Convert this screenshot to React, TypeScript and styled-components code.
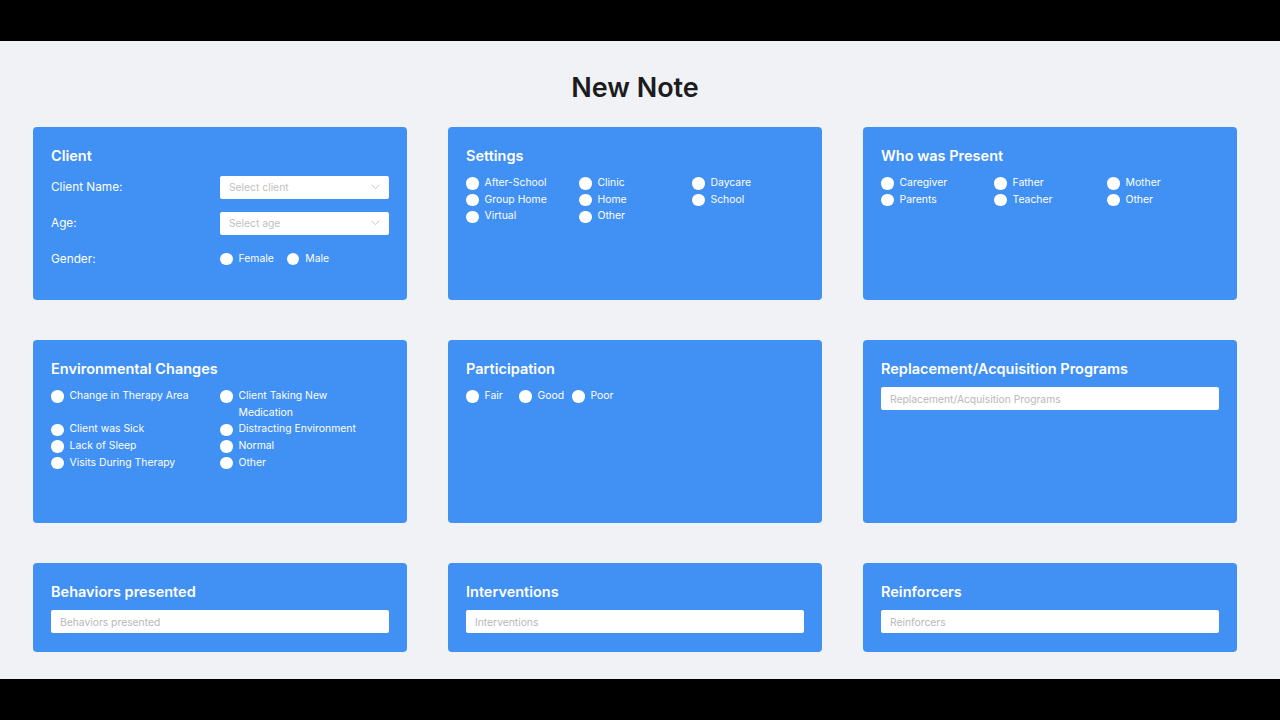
import { FunctionComponent } from 'react';
import styled, { createGlobalStyle } from 'styled-components';

const GlobalStyle = createGlobalStyle`
  html, body {
    margin: 0;
    padding: 0;
    background: #000;
  }
  body {
    font-family: Inter, 'Noto Sans', 'Liberation Sans', sans-serif;
  }
`;

const Letterbox = styled.div<{ h: number }>`
  height: ${(p) => p.h}px;
  background: #000;
`;

const Page = styled.div`
  height: 638px;
  background: #f0f2f5;
  padding: 0 43px 0 33px;
  box-sizing: border-box;
  overflow: hidden;
`;

const Title = styled.h1`
  margin: 0;
  padding: 30px 0 22px;
  text-align: center;
  font-size: 27px;
  line-height: 34px;
  font-weight: 600;
  color: #1c1c1e;
`;

const Grid = styled.div`
  display: grid;
  grid-template-columns: repeat(3, 1fr);
  column-gap: 41px;
  row-gap: 40px;
`;

const Card = styled.section<{ minH?: number }>`
  background: #4190f4;
  border-radius: 4px;
  padding: 18px 18px 19px;
  box-sizing: border-box;
  min-height: ${(p) => (p.minH ? `${p.minH}px` : 'auto')};
  color: #fff;
`;

const CardTitle = styled.h2`
  margin: 0 0 4px;
  font-size: 14.5px;
  line-height: 22px;
  font-weight: 600;
  color: #fff;
`;

const FieldRow = styled.div`
  display: grid;
  grid-template-columns: 169px 1fr;
  align-items: center;
  height: 36px;
  &:first-of-type {
    margin-top: -2px;
  }
`;

const FieldLabel = styled.span`
  font-size: 11.8px;
  color: #fff;
`;

const Select = styled.div`
  height: 23px;
  background: #fff;
  border-radius: 2px;
  display: flex;
  align-items: center;
  justify-content: space-between;
  padding: 0 9px;
  font-size: 10.3px;
  color: #bfbfbf;
`;

const TextInput = styled.input`
  display: block;
  width: 100%;
  box-sizing: border-box;
  height: 23px;
  border: none;
  border-radius: 2px;
  background: #fff;
  margin-top: 7px;
  padding: 0 9px;
  font-family: inherit;
  font-size: 10.3px;
  color: #333;
  outline: none;
  &::placeholder {
    color: #b8b8b8;
  }
`;

const RadioGrid = styled.div<{ cols: string }>`
  display: grid;
  grid-template-columns: ${(p) => p.cols};
  margin-top: 8px;
`;

const RadioItem = styled.label`
  display: flex;
  align-items: flex-start;
  gap: 6px;
  font-size: 10.4px;
  line-height: 16.7px;
  color: #fff;
  padding-right: 6px;
`;

const Dot = styled.span`
  flex: none;
  width: 12.5px;
  height: 12.5px;
  margin-top: 2.1px;
  border-radius: 50%;
  background: #fff;
`;

const InlineRadios = styled.div`
  display: flex;
  gap: 7px;
`;

const Chevron = () => (
  <svg width="9" height="6" viewBox="0 0 9 6" fill="none">
    <path d="M0.8 0.8 L4.5 4.8 L8.2 0.8" stroke="#c4c4c4" strokeWidth="0.9" />
  </svg>
);

const Radio: FunctionComponent<{ label: string }> = ({ label }) => (
  <RadioItem>
    <Dot />
    <span>{label}</span>
  </RadioItem>
);

const settings = ['After-School', 'Clinic', 'Daycare', 'Group Home', 'Home', 'School', 'Virtual', 'Other'];
const present = ['Caregiver', 'Father', 'Mother', 'Parents', 'Teacher', 'Other'];
const envChanges = [
  'Change in Therapy Area',
  'Client Taking New Medication',
  'Client was Sick',
  'Distracting Environment',
  'Lack of Sleep',
  'Normal',
  'Visits During Therapy',
  'Other',
];

const App: FunctionComponent = () => {
  return (
    <>
      <GlobalStyle />
      <Letterbox h={41} />
      <Page>
        <Title>New Note</Title>
        <Grid>
          <Card minH={173}>
            <CardTitle>Client</CardTitle>
            <FieldRow>
              <FieldLabel>Client Name:</FieldLabel>
              <Select>
                Select client
                <Chevron />
              </Select>
            </FieldRow>
            <FieldRow>
              <FieldLabel>Age:</FieldLabel>
              <Select>
                Select age
                <Chevron />
              </Select>
            </FieldRow>
            <FieldRow>
              <FieldLabel>Gender:</FieldLabel>
              <InlineRadios>
                <Radio label="Female" />
                <Radio label="Male" />
              </InlineRadios>
            </FieldRow>
          </Card>

          <Card minH={173}>
            <CardTitle>Settings</CardTitle>
            <RadioGrid cols="113px 113px 1fr">
              {settings.map((s) => (
                <Radio key={s} label={s} />
              ))}
            </RadioGrid>
          </Card>

          <Card minH={173}>
            <CardTitle>Who was Present</CardTitle>
            <RadioGrid cols="113px 113px 1fr">
              {present.map((s, i) => (
                <Radio key={s + i} label={s} />
              ))}
            </RadioGrid>
          </Card>

          <Card minH={183}>
            <CardTitle>Environmental Changes</CardTitle>
            <RadioGrid cols="169px 1fr">
              {envChanges.map((s, i) => (
                <Radio key={s + i} label={s} />
              ))}
            </RadioGrid>
          </Card>

          <Card minH={183}>
            <CardTitle>Participation</CardTitle>
            <RadioGrid cols="53px 53px 53px">
              <Radio label="Fair" />
              <Radio label="Good" />
              <Radio label="Poor" />
            </RadioGrid>
          </Card>

          <Card minH={183}>
            <CardTitle>Replacement/Acquisition Programs</CardTitle>
            <TextInput placeholder="Replacement/Acquisition Programs" />
          </Card>

          <Card>
            <CardTitle>Behaviors presented</CardTitle>
            <TextInput placeholder="Behaviors presented" />
          </Card>

          <Card>
            <CardTitle>Interventions</CardTitle>
            <TextInput placeholder="Interventions" />
          </Card>

          <Card>
            <CardTitle>Reinforcers</CardTitle>
            <TextInput placeholder="Reinforcers" />
          </Card>
        </Grid>
      </Page>
      <Letterbox h={41} />
    </>
  );
};

export default App;
